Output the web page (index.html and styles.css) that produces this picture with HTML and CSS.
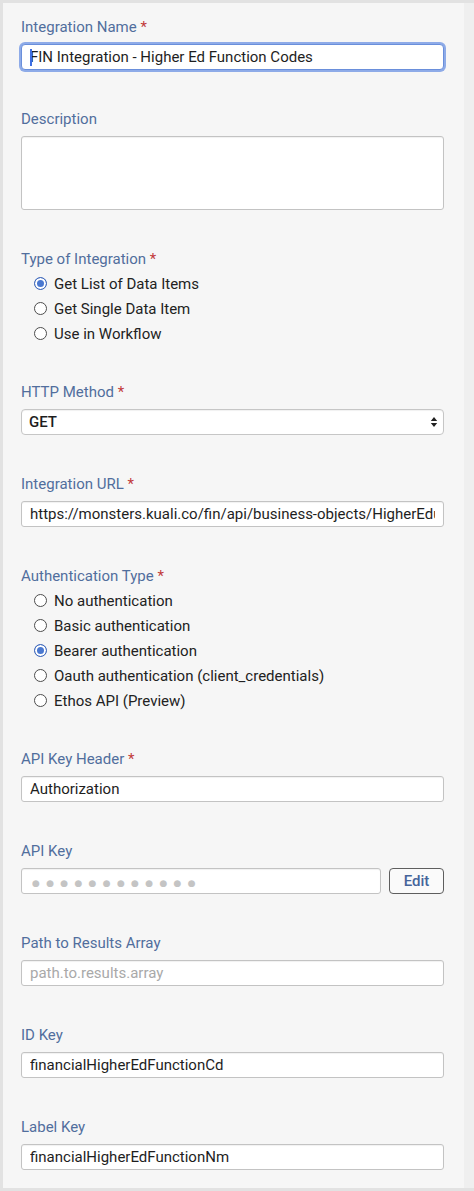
FILE: index.html
```html
<!DOCTYPE html>
<html lang="en">
<head>
<meta charset="utf-8">
<title>Integration</title>
<link rel="stylesheet" href="styles.css">
</head>
<body>
<div class="frame">
  <form class="panel">
    <div class="field">
      <label class="label">Integration Name <span class="req">*</span></label>
      <div class="input-wrap">
        <input class="input is-focused" type="text" value="FIN Integration - Higher Ed Function Codes">
        <span class="caret"></span>
      </div>
    </div>

    <div class="field">
      <label class="label">Description</label>
      <textarea class="input textarea"></textarea>
    </div>

    <div class="field radios">
      <div class="label">Type of Integration <span class="req">*</span></div>
      <ul class="radio-list">
        <li><label class="radio-option"><input class="radio" type="radio" name="type" checked>Get List of Data Items</label></li>
        <li><label class="radio-option"><input class="radio" type="radio" name="type">Get Single Data Item</label></li>
        <li><label class="radio-option"><input class="radio" type="radio" name="type">Use in Workflow</label></li>
      </ul>
    </div>

    <div class="field">
      <label class="label">HTTP Method <span class="req">*</span></label>
      <div class="select-wrap">
        <select class="input select"><option>GET</option></select>
        <svg class="select-arrows" width="8" height="12" viewBox="0 0 8 12"><path d="M4 1 L7.2 5 H0.8 Z M4 11 L7.2 7 H0.8 Z" fill="#222"/></svg>
      </div>
    </div>

    <div class="field">
      <label class="label">Integration URL <span class="req">*</span></label>
      <input class="input" type="text" value="https://monsters.kuali.co/fin/api/business-objects/HigherEduFunctionCodes">
    </div>

    <div class="field radios">
      <div class="label">Authentication Type <span class="req">*</span></div>
      <ul class="radio-list">
        <li><label class="radio-option"><input class="radio" type="radio" name="auth">No authentication</label></li>
        <li><label class="radio-option"><input class="radio" type="radio" name="auth">Basic authentication</label></li>
        <li><label class="radio-option"><input class="radio" type="radio" name="auth" checked>Bearer authentication</label></li>
        <li><label class="radio-option"><input class="radio" type="radio" name="auth">Oauth authentication (client_credentials)</label></li>
        <li><label class="radio-option"><input class="radio" type="radio" name="auth">Ethos API (Preview)</label></li>
      </ul>
    </div>

    <div class="field">
      <label class="label">API Key Header <span class="req">*</span></label>
      <input class="input" type="text" value="Authorization">
    </div>

    <div class="field">
      <label class="label">API Key</label>
      <div class="key-row">
        <input class="input key-input" type="text" placeholder="●●●●●●●●●●●●" readonly>
        <button class="btn" type="button">Edit</button>
      </div>
    </div>

    <div class="field">
      <label class="label">Path to Results Array</label>
      <input class="input" type="text" placeholder="path.to.results.array">
    </div>

    <div class="field">
      <label class="label">ID Key</label>
      <input class="input" type="text" value="financialHigherEdFunctionCd">
    </div>

    <div class="field last">
      <label class="label">Label Key</label>
      <input class="input" type="text" value="financialHigherEdFunctionNm">
    </div>
  </form>
</div>
</body>
</html>
```

FILE: styles.css
```css
html, body {
  margin: 0;
  height: 100%;
}

body {
  background: #e2e2e2;
  font-family: Roboto, "Liberation Sans", sans-serif;
}

.frame {
  box-sizing: border-box;
  height: 100vh;
  padding: 3px 0 3px 3px;
}

.panel {
  box-sizing: border-box;
  height: 100%;
  margin: 0;
  background: #f6f6f6;
  border-right: 10px solid #efefef;
  padding: 15px 20px 0 18px;
  display: flex;
  flex-direction: column;
}

.field {
  display: flex;
  flex-direction: column;
  margin-bottom: 40px;
}

.field.radios {
  margin-bottom: 37px;
}

.field.last {
  margin-bottom: 0;
}

.label {
  font-size: 15px;
  line-height: 18px;
  color: #516e9d;
  margin-bottom: 8px;
}

.radios .label {
  margin-bottom: 3px;
}

.req {
  color: #c23b3b;
}

.input {
  box-sizing: border-box;
  display: block;
  width: 100%;
  height: 26px;
  margin: 0;
  padding: 0 8px;
  border: 1px solid #c3c3c3;
  border-radius: 3px;
  background: #fff;
  box-shadow: inset 0 1px 1px rgba(0, 0, 0, 0.06);
  font-family: Roboto, "Liberation Sans", sans-serif;
  font-size: 15px;
  color: #1e1e1e;
  outline: none;
}

.input::placeholder {
  color: #a9a9a9;
  opacity: 1;
}

.input-wrap {
  position: relative;
}

.input.is-focused {
  border-color: #6a8fdb;
  border-radius: 4px;
  box-shadow: 0 0 0 2px #8eabe8;
}

.caret {
  position: absolute;
  left: 9px;
  top: 5px;
  width: 2px;
  height: 17px;
  background: #3d6fe3;
}

.textarea {
  height: 74px;
  resize: none;
  padding: 6px 8px;
}

.radio-list {
  list-style: none;
  margin: 0;
  padding: 0 0 0 13px;
}

.radio-option {
  display: flex;
  align-items: center;
  gap: 7px;
  height: 25px;
  font-size: 15px;
  color: #222;
}

.radio {
  appearance: none;
  -webkit-appearance: none;
  box-sizing: border-box;
  width: 13px;
  height: 13px;
  margin: 0;
  border: 1.5px solid #4d4d4d;
  border-radius: 50%;
  background: #fff;
}

.radio:checked {
  border-color: #3f67b8;
  background: #4a78d0;
  box-shadow: inset 0 0 0 2px #fff;
}

.select-wrap {
  position: relative;
}

.select {
  appearance: none;
  -webkit-appearance: none;
  padding-left: 7px;
  font-weight: 500;
  border-color: #c6c6c6;
  border-radius: 4px;
}

.select-arrows {
  position: absolute;
  right: 6px;
  top: 7px;
  pointer-events: none;
}

.key-row {
  display: flex;
  gap: 8px;
}

.key-input {
  flex: 1;
  width: auto;
  padding-left: 10px;
}

.key-input::placeholder {
  color: #c4c4c4;
  letter-spacing: 6.3px;
  font-family: "DejaVu Sans", sans-serif;
  font-size: 9px;
}

.btn {
  box-sizing: border-box;
  width: 55px;
  height: 26px;
  margin: 0;
  padding: 0;
  border: 1px solid #5e5e5e;
  border-radius: 4px;
  background: #fafafa;
  font-family: Roboto, "Liberation Sans", sans-serif;
  font-size: 15px;
  font-weight: 500;
  color: #45649a;
}
```
